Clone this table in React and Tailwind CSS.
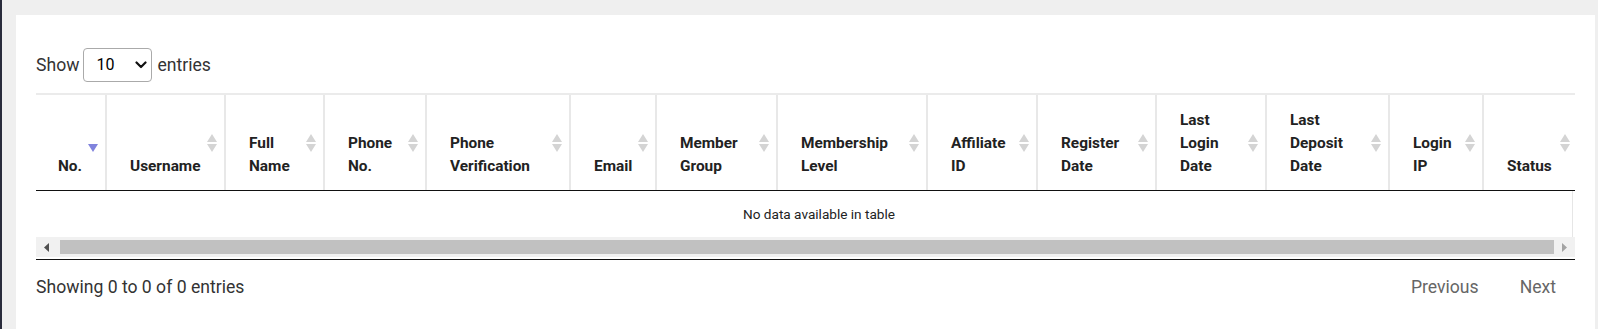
import { useState } from 'react';

const columns = [
  { key: 'no', lines: ['No.'], width: 'w-[69px]', sorted: true, first: true },
  { key: 'username', lines: ['Username'], width: 'w-[119px]' },
  { key: 'fullname', lines: ['Full', 'Name'], width: 'w-[99px]' },
  { key: 'phone', lines: ['Phone', 'No.'], width: 'w-[102px]' },
  { key: 'phoneverify', lines: ['Phone', 'Verification'], width: 'w-[144px]' },
  { key: 'email', lines: ['Email'], width: 'w-[86px]' },
  { key: 'group', lines: ['Member', 'Group'], width: 'w-[121px]' },
  { key: 'level', lines: ['Membership', 'Level'], width: 'w-[150px]' },
  { key: 'affiliate', lines: ['Affiliate', 'ID'], width: 'w-[110px]' },
  { key: 'register', lines: ['Register', 'Date'], width: 'w-[119px]' },
  { key: 'lastlogin', lines: ['Last', 'Login', 'Date'], width: 'w-[110px]' },
  { key: 'lastdeposit', lines: ['Last', 'Deposit', 'Date'], width: 'w-[123px]' },
  { key: 'loginip', lines: ['Login', 'IP'], width: 'w-[94px]' },
  { key: 'status', lines: ['Status'], width: 'w-[95px]' },
];

// up/down sort arrows, only the down one (blue) when sorted
function SortIcon({ sorted }) {
  return (
    <svg className="absolute right-[7px] top-1/2 -translate-y-1/2" width="10" height="19" viewBox="0 0 10 19">
      {!sorted && <polygon points="0,8.5 5,0.5 10,8.5" fill="#d4d4d4" />}
      <polygon points="0,10.5 10,10.5 5,18.5" fill={sorted ? '#8083dd' : '#d4d4d4'} />
    </svg>
  );
}

function App() {
  const [pageLength, setPageLength] = useState('10');

  return (
    <div className="min-h-screen flex bg-[#efefef] border-l-2 border-[#292b3b] pl-[14px] pt-[15px] pr-[3px] font-['Roboto',sans-serif] text-[#333]">
      <div className="flex-1 bg-white px-[20px] pt-[33px] pb-[20px]">
        {/* Length menu */}
        <div className="flex items-center text-[17.6px] leading-[26px]">
          <span>Show</span>
          <div className="relative ml-[4px] mr-[5px]">
            <select
              value={pageLength}
              onChange={(e) => setPageLength(e.target.value)}
              className="appearance-none w-[69px] h-[34px] border border-[#aaa] rounded-[4px] pl-[12px] pr-[24px] text-[16px] text-black bg-white outline-none"
            >
              <option value="10">10</option>
              <option value="25">25</option>
              <option value="50">50</option>
              <option value="100">100</option>
            </select>
            <svg className="absolute right-[5px] top-[13px] pointer-events-none" width="12" height="8" viewBox="0 0 12 8">
              <path d="M1.5 1.5 L6 6 L10.5 1.5" fill="none" stroke="#111" strokeWidth="2.2" strokeLinecap="round" strokeLinejoin="round" />
            </svg>
          </div>
          <span>entries</span>
        </div>

        {/* Scroll head */}
        <div className="mt-[11px] w-[1539px] overflow-hidden border-t-2 border-b border-t-[#ebebeb] border-b-[#111]">
          <div className="flex">
            {columns.map(col => (
              <div
                key={col.key}
                className={`relative shrink-0 h-[95px] flex flex-col justify-end pb-[12px] text-[15.4px] leading-[23px] font-bold text-[#222] ${col.width} ${col.first ? 'pl-[22px]' : 'border-l-2 border-[#e8e8e8] pl-[23px]'}`}
              >
                {col.lines.map(line => (
                  <span key={line} className="whitespace-nowrap">{line}</span>
                ))}
                <SortIcon sorted={col.sorted} />
              </div>
            ))}
          </div>
        </div>

        {/* Scroll body */}
        <div className="w-[1539px]">
          <div className="w-[1537px] h-[46px] overflow-hidden border-r border-[#e6e6e6]">
            <div className="w-[1566px] h-full flex items-center justify-center text-[13.6px] text-[#222]">
              No data available in table
            </div>
          </div>
          <div className="flex h-[20px] bg-[#f1f1f1]">
            <div className="w-[20px] flex items-center justify-center">
              <svg width="5" height="9" viewBox="0 0 5 9">
                <polygon points="5,0 5,9 0,4.5" fill="#505050" />
              </svg>
            </div>
            <div className="flex-1 ml-[4px] my-[3px] bg-[#c1c1c1]"></div>
            <div className="w-[21px] flex items-center justify-center">
              <svg width="5" height="9" viewBox="0 0 5 9">
                <polygon points="0,0 0,9 5,4.5" fill="#a3a3a3" />
              </svg>
            </div>
          </div>
          <div className="mt-[2px] border-t border-[#111]"></div>
        </div>

        {/* Info + paging */}
        <div className="mt-[14px] w-[1539px] flex items-center justify-between text-[17.6px] leading-[26px]">
          <div>Showing 0 to 0 of 0 entries</div>
          <div className="flex text-[#666]">
            <span className="px-[19px] cursor-default">Previous</span>
            <span className="px-[19px] ml-[3px] cursor-default">Next</span>
          </div>
        </div>
      </div>
    </div>
  );
}

export default App;
